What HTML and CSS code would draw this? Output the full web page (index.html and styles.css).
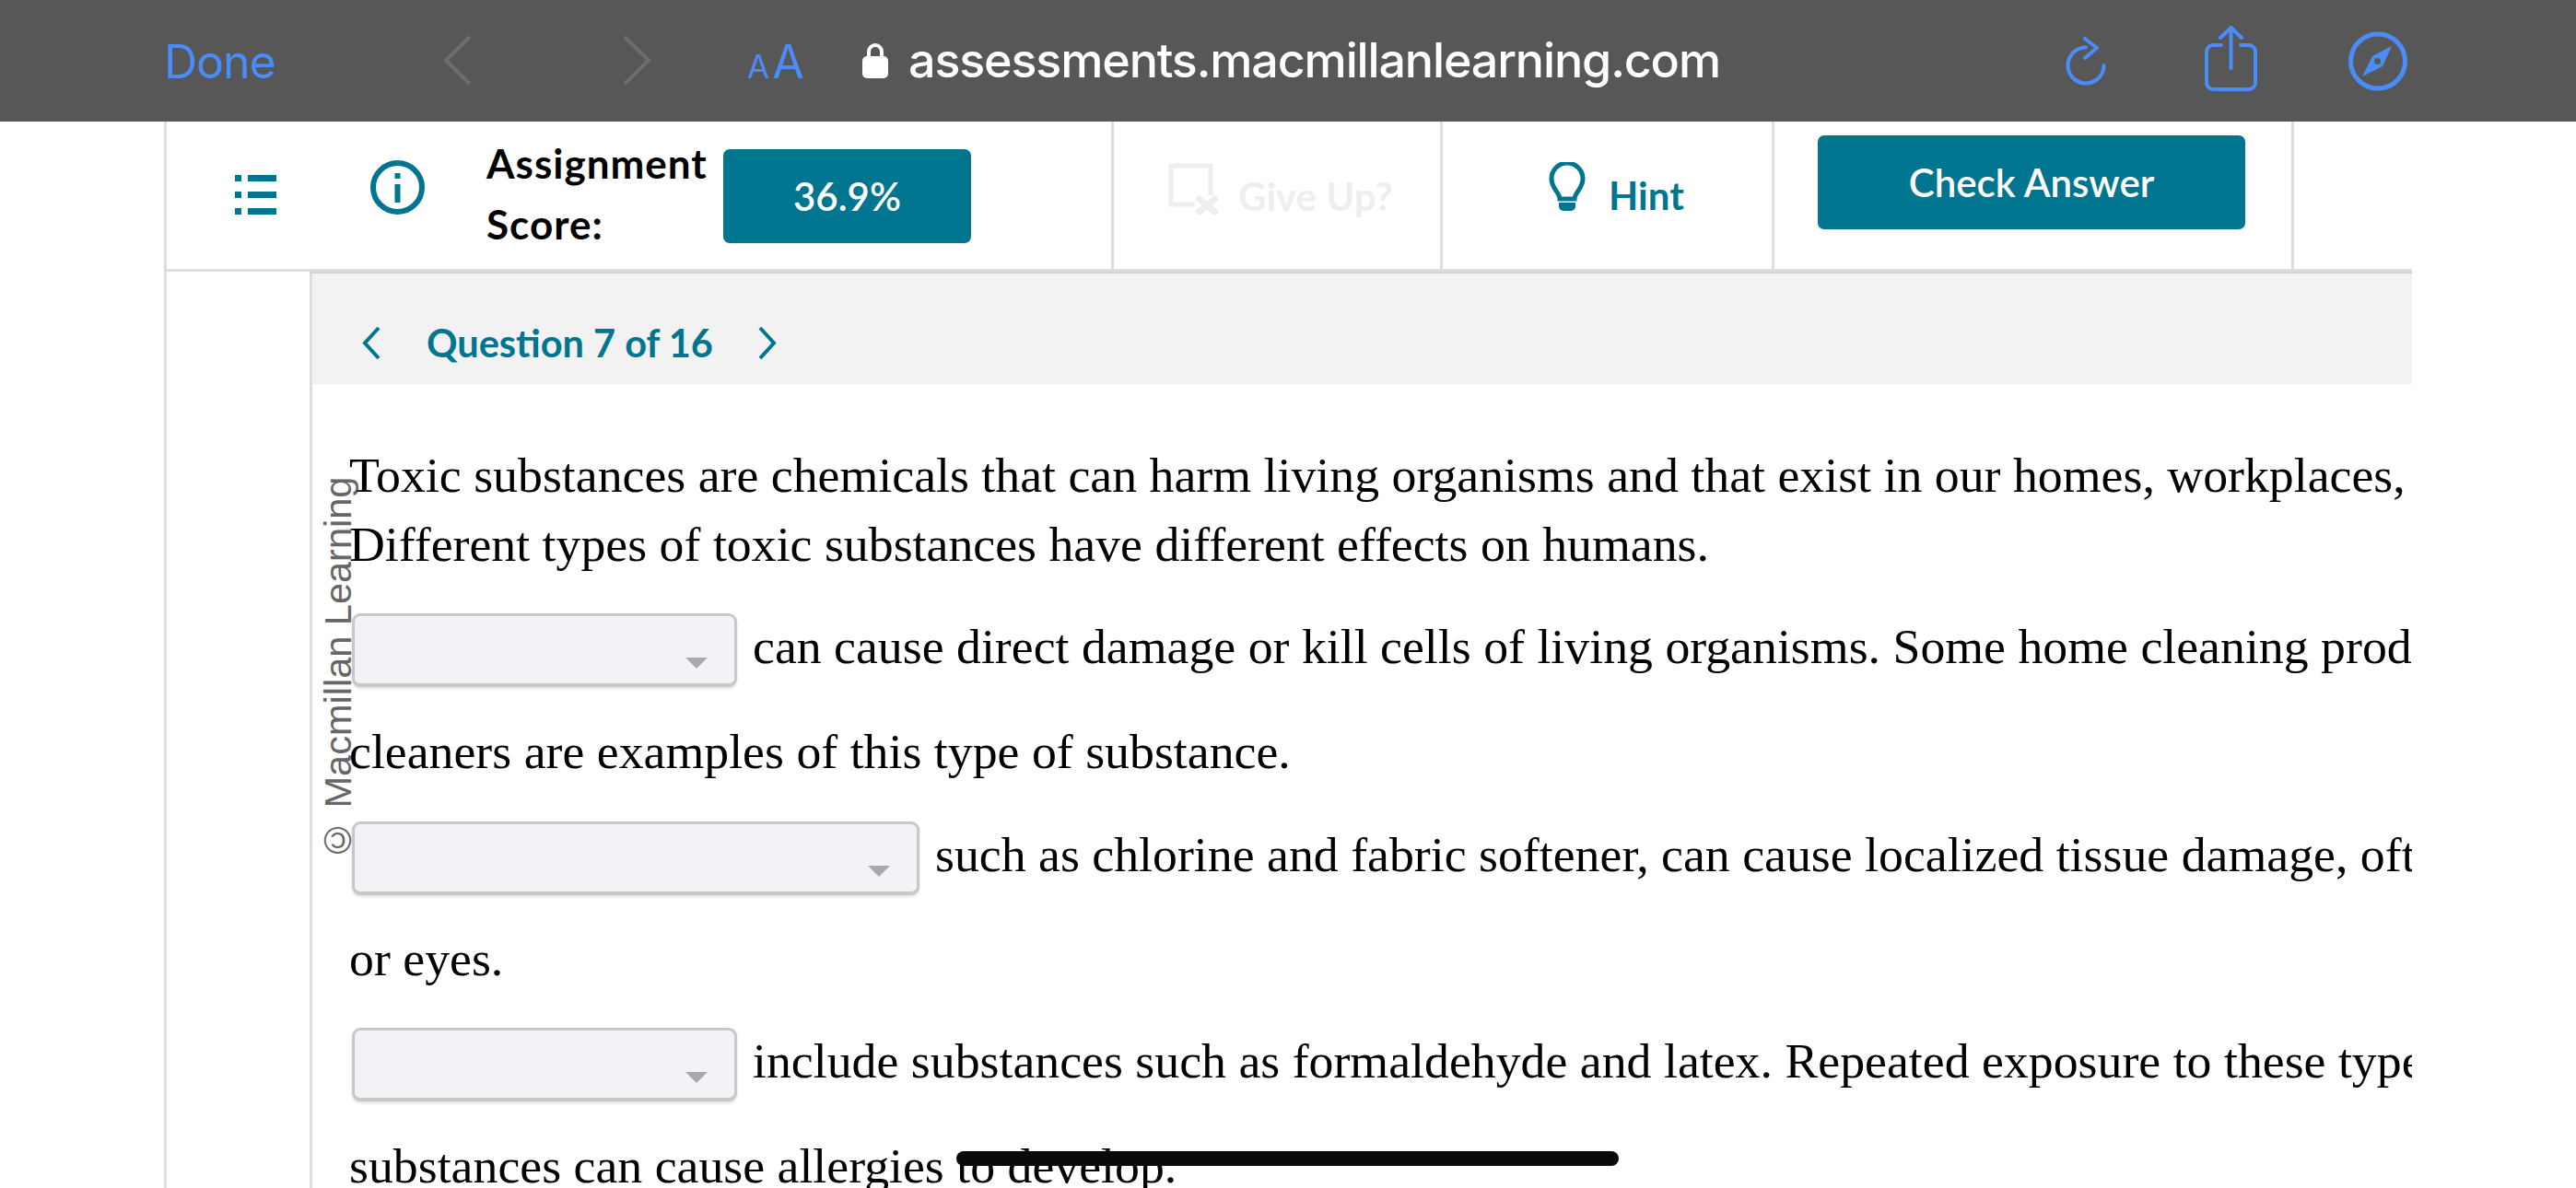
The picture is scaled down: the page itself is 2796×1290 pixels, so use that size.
FILE: index.html
```html
<!DOCTYPE html>
<html lang="en">
<head>
<meta charset="utf-8">
<title>Question 7 of 16</title>
<link rel="stylesheet" href="styles.css">
</head>
<body>
<header class="browser">
  <span class="done">Done</span>
  <svg class="chev chev-back" viewBox="0 0 31 55"><path d="M29 2 3 27.5 29 53" /></svg>
  <svg class="chev chev-fwd" viewBox="0 0 31 55"><path d="M2 2 28 27.5 2 53" /></svg>
  <span class="aa"><span class="aa-small">A</span><span class="aa-big">A</span></span>
  <svg class="lock" viewBox="0 0 28 39"><path class="lock-body" d="M5 15h18a5 5 0 0 1 5 5v14a5 5 0 0 1-5 5H5a5 5 0 0 1-5-5V20a5 5 0 0 1 5-5z"/><path class="lock-arc" d="M7 17V10a7 7 0 0 1 14 0v7"/></svg>
  <span class="url">assessments.macmillanlearning.com</span>
  <div class="browser-tools">
    <svg class="reload" viewBox="0 0 44 53"><path d="M41.500 31a19.500 19.500 0 1 1-19.500-19.500"/><path d="M21 2 34 12 21 23"/></svg>
    <svg class="share" viewBox="0 0 57 71"><path d="M18 21H9a7 7 0 0 0-7 7v34a7 7 0 0 0 7 7h39a7 7 0 0 0 7-7V28a7 7 0 0 0-7-7h-9"/><path d="M28.500 46V3"/><path d="M17 13 28.500 2 40 13"/></svg>
    <svg class="compass" viewBox="0 0 64 65"><circle cx="32" cy="32.500" r="29.500"/><path class="needle" d="M47 16 37 38 26 27z"/><path class="needle" d="M15 49 26 27 37 38z"/><circle class="pin" cx="31.500" cy="32.500" r="3.500"/></svg>
  </div>
</header>

<div class="page">
  <nav class="toolbar">
    <div class="score-cell">
      <svg class="list-icon" viewBox="0 0 45 43"><path d="M0 0h7v7H0zM14 0h31v7H14zM0 18h7v7H0zM14 18h31v7H14zM0 36h7v7H0zM14 36h31v7H14z"/></svg>
      <svg class="info-icon" viewBox="0 0 59 59"><circle cx="29.500" cy="29.500" r="26.500"/><path d="M29.500 26v20M29.500 14v6"/></svg>
      <div class="score-label">Assignment<br>Score:</div>
      <div class="score-box">36.9%</div>
    </div>
    <div class="giveup-cell">
      <svg class="giveup-icon" viewBox="0 0 56 56"><path d="M29 45H3V3h43v32"/><path class="giveup-x" d="M31 37 53 55M53 37 31 55"/></svg>
      <span>Give Up?</span>
    </div>
    <div class="hint-cell">
      <svg class="hint-icon" viewBox="0 0 40 53"><path d="M12 40c0-7-9-11-9-22a17 17 0 0 1 34 0c0 11-9 15-9 22z"/><path class="bulb-base" d="M11 44h18v4a5 5 0 0 1-5 5h-8a5 5 0 0 1-5-5z"/></svg>
      <span>Hint</span>
    </div>
    <div class="check-cell"><div class="check-btn">Check Answer</div></div>
  </nav>

  <div class="body-row">
    <aside class="side"></aside>
    <main class="main">
      <div class="qbar">
        <svg class="qarrow" viewBox="0 0 20 37"><path d="M18 2 3 18.500 18 35"/></svg>
        <span class="qtitle">Question 7 of 16</span>
        <svg class="qarrow" viewBox="0 0 20 37"><path d="M2 2 17 18.500 2 35"/></svg>
      </div>
      <div class="copyright">© Macmillan Learning</div>
      <div class="question">
        <div class="line">Toxic substances are chemicals that can harm living organisms and that exist in our homes, workplaces, and the environment.</div>
        <div class="line gap-36">Different types of toxic substances have different effects on humans.</div>
        <div class="line blank-row row-114"><span class="dropdown short"></span><span>can cause direct damage or kill cells of living organisms. Some home cleaning products, such as bleach and oven</span></div>
        <div class="line gap-37">cleaners are examples of this type of substance.</div>
        <div class="line blank-row row-113"><span class="dropdown long"></span><span>such as chlorine and fabric softener, can cause localized tissue damage, often to the skin</span></div>
        <div class="line gap-36">or eyes.</div>
        <div class="line blank-row row-114"><span class="dropdown short"></span><span>include substances such as formaldehyde and latex. Repeated exposure to these types of</span></div>
        <div class="line">substances can cause allergies to develop.</div>
      </div>
    </main>
  </div>
</div>
<div class="home-indicator"></div>
</body>
</html>
```
FILE: styles.css
```css
* { box-sizing: border-box; }
html, body { margin: 0; height: 1290px; overflow: hidden; background: #fff; }
body { width: 2796px; position: relative; font-family: "Lato", "Open Sans", sans-serif; }

.browser { height: 132px; background: #575757; display: flex; align-items: flex-start; padding-left: 178px; padding-right: 183px; color: #4a8df8; font-family: "Inter", "Liberation Sans", sans-serif; }
.done { font-size: 50px; line-height: 60px; margin-top: 37px; width: 119px; letter-spacing: -1px; }
.chev { width: 31px; height: 55px; margin-top: 38px; fill: none; stroke: #6d6d6d; stroke-width: 4; }
.chev-back { margin-left: 184px; }
.chev-fwd { margin-left: 164px; }
.aa { margin-left: 104px; width: 58px; height: 60px; margin-top: 37px; display: flex; align-items: baseline; gap: 3px; line-height: 60px; }
.aa-small { font-size: 35px; }
.aa-big { font-size: 50px; }
.lock { width: 28px; height: 39px; margin-left: 67px; margin-top: 46px; }
.lock-body { fill: #fff; }
.lock-arc { fill: none; stroke: #fff; stroke-width: 4; }
.url { margin-left: 22px; font-size: 52px; letter-spacing: -1.15px; line-height: 60px; margin-top: 36px; color: #fff; font-weight: 500; white-space: nowrap; }
.browser-tools { margin-left: auto; display: flex; align-items: flex-start; }
.browser-tools svg { fill: none; stroke: #4a8df8; stroke-linecap: round; stroke-linejoin: round; }
.reload { width: 44px; height: 53px; margin-top: 40px; stroke-width: 4; }
.share { width: 57px; height: 71px; margin-top: 28px; margin-left: 107px; stroke-width: 4; }
.compass { width: 64px; height: 65px; margin-top: 34px; margin-left: 99px; stroke-width: 5; }
.browser-tools .needle { fill: #4a8df8; stroke: none; }
.browser-tools .pin { fill: #575757; stroke: none; }

.page { margin-left: 178px; width: 2440px; height: 1158px; border-left: 3px solid #ddd; display: flex; flex-direction: column; }

.toolbar { height: 163px; flex: none; display: flex; border-bottom: 3px solid #ddd; font-weight: 700; font-size: 42px; }
.score-cell { width: 1028px; flex: none; display: flex; align-items: flex-start; border-right: 3px solid #ddd; }
.list-icon { width: 45px; height: 43px; margin: 58px 0 0 74px; fill: #00758f; flex: none; }
.info-icon { width: 59px; height: 59px; margin: 42px 0 0 102px; fill: none; stroke: #00758f; stroke-width: 6; flex: none; }
.score-label { margin: 12px 0 0 67px; width: 257px; font-size: 44px; letter-spacing: 1px; line-height: 66px; color: #000; flex: none; white-space: nowrap; }
.score-box { width: 269px; height: 102px; margin-top: 30px; border-radius: 7px; background: #00758f; color: #fff; font-weight: 600; display: flex; align-items: center; justify-content: center; flex: none; }

.giveup-cell { width: 357px; flex: none; border-right: 3px solid #ddd; display: flex; align-items: flex-start; padding: 45px 0 0 59px; color: #eee; gap: 20px; }
.giveup-cell span, .hint-cell span { line-height: 50px; margin-top: 11px; }
.giveup-icon { width: 56px; height: 56px; fill: none; stroke: #eee; stroke-width: 5; flex: none; }
.giveup-icon .giveup-x { stroke-width: 7; }

.hint-cell { width: 360px; flex: none; border-right: 3px solid #ddd; display: flex; align-items: flex-start; padding: 44px 0 0 115px; color: #00758f; gap: 25px; }
.hint-icon { width: 40px; height: 53px; fill: none; stroke: #00758f; stroke-width: 5; flex: none; }
.hint-icon .bulb-base { fill: #00758f; stroke: none; }

.check-cell { width: 564px; flex: none; border-right: 3px solid #ddd; padding: 15px 0 0 47px; }
.check-btn { width: 464px; height: 102px; border-radius: 7px; background: #00758f; color: #fff; font-weight: 600; display: flex; align-items: center; justify-content: center; }

.body-row { flex: 1; display: flex; min-height: 0; }
.side { width: 155px; flex: none; }
.main { flex: 1; min-width: 0; position: relative; overflow: hidden; border-left: 3px solid #ddd; border-top: 2px solid #d2d2d2; }

.qbar { height: 120px; background: #f2f2f2; display: flex; align-items: center; padding: 30px 0 0 54px; color: #00758f; }
.qarrow { width: 20px; height: 37px; fill: none; stroke: #00758f; stroke-width: 4; flex: none; }
.qtitle { font-size: 41.500px; font-weight: 700; margin: 0 50px; white-space: nowrap; width: 310px; }

.copyright { position: absolute; left: 10px; top: 230px; height: 409px; writing-mode: vertical-rl; transform: rotate(180deg); font-family: "Liberation Sans", sans-serif; font-size: 41.500px; line-height: 36px; color: #666; white-space: nowrap; text-align: left; }

.question { position: relative; padding: 62px 0 0 40px; font-family: "Liberation Serif", serif; font-size: 53.800px; line-height: 75px; color: #000; white-space: nowrap; }
.line { height: 75px; }
.gap-36 { margin-bottom: 36px; }
.gap-37 { margin-bottom: 37px; }
.blank-row { display: flex; align-items: flex-start; gap: 17px; }
.row-113 { height: 113px; }
.row-114 { height: 114px; }
.dropdown { display: flex; align-items: flex-end; justify-content: flex-end; height: 80px; margin: 1px 0 0 3px; border: 3px solid #c8c8c8; border-bottom-width: 4px; border-radius: 9px; background: #f2f3f7; box-shadow: 0 2px 3px rgba(0,0,0,.12); padding: 0 29px 16px 0; flex: none; }
.dropdown::after { content: ""; width: 0; height: 0; border-left: 12px solid transparent; border-right: 12px solid transparent; border-top: 12px solid #a9a9a9; }
.short { width: 418px; }
.long { width: 616px; }

.home-indicator { position: absolute; left: 1038px; top: 1250px; width: 719px; height: 16px; border-radius: 8px; background: #0a0a0a; }
```
